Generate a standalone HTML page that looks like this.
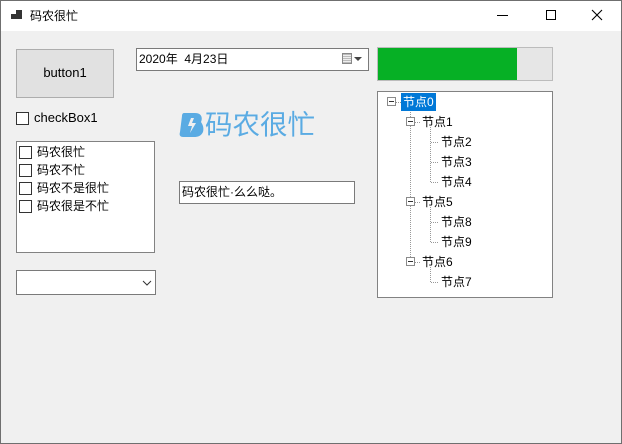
<!DOCTYPE html>
<html><head><meta charset="utf-8"><style>
*{margin:0;padding:0;box-sizing:border-box}
body{width:622px;height:444px;overflow:hidden;background:#f0f0f0;font-family:"Liberation Sans","Noto Sans CJK SC",sans-serif;font-size:12px;color:#000;position:relative}
.a{position:absolute}
.win{left:0;top:0;width:622px;height:444px;border:1px solid #6f6f6f}
.title{left:1px;top:1px;width:620px;height:30px;background:#fff}
.cb{width:13px;height:13px;border:1px solid #333;background:#fff}
.t{white-space:nowrap;line-height:16px}
.dot{border-left:1px dotted #999}
.hd{border-top:1px dotted #999;height:0}
.eb{width:9px;height:9px;border:1px solid #8a8a8a;background:#fff}
.eb:after{content:"";position:absolute;left:1px;top:3px;width:5px;height:1px;background:#333}
</style></head><body>
<div class="a win"></div>
<div class="a title"></div>
<div class="a" style="left:11px;top:14px;width:5px;height:5px;background:#333"></div>
<div class="a" style="left:16px;top:10px;width:6px;height:9px;background:#333"></div>
<div class="a t" style="left:30px;top:8px;font-size:12px">码农很忙</div>
<div class="a" style="left:497px;top:15px;width:11px;height:1px;background:#000"></div>
<div class="a" style="left:546px;top:10px;width:10px;height:10px;border:1px solid #000"></div>
<svg class="a" style="left:591px;top:9px" width="12" height="12"><path d="M1 1L11 11M11 1L1 11" stroke="#000" stroke-width="1.1"/></svg>

<div class="a" style="left:16px;top:49px;width:98px;height:49px;background:#e1e1e1;border:1px solid #adadad"></div>
<div class="a t" style="left:16px;top:65px;width:98px;text-align:center;font-size:13px">button1</div>

<div class="a" style="left:136px;top:48px;width:233px;height:23px;background:#fff;border:1px solid #7a7a7a"></div>
<div class="a t" style="left:139px;top:51px;font-size:12px">2020年&nbsp; 4月23日</div>
<div class="a" style="left:342px;top:53px;width:10px;height:11px;border:1px solid #888;background:repeating-linear-gradient(0deg,#bbb 0 1px,#eee 1px 2px)"></div>
<div class="a" style="left:354px;top:57px;width:0;height:0;border-left:4px solid transparent;border-right:4px solid transparent;border-top:4px solid #444"></div>

<div class="a" style="left:377px;top:47px;width:176px;height:34px;background:#e6e6e6;border:1px solid #bcbcbc"></div>
<div class="a" style="left:378px;top:48px;width:139px;height:32px;background:#06b025"></div>

<div class="a cb" style="left:16px;top:112px"></div>
<div class="a t" style="left:34px;top:110px;font-size:13px">checkBox1</div>

<div class="a" style="left:16px;top:141px;width:139px;height:112px;background:#fff;border:1px solid #828282"></div>
<div class="a cb" style="left:19px;top:146px"></div><div class="a t" style="left:37px;top:144px">码农很忙</div>
<div class="a cb" style="left:19px;top:164px"></div><div class="a t" style="left:37px;top:162px">码农不忙</div>
<div class="a cb" style="left:19px;top:182px"></div><div class="a t" style="left:37px;top:180px">码农不是很忙</div>
<div class="a cb" style="left:19px;top:200px"></div><div class="a t" style="left:37px;top:198px">码农很是不忙</div>

<div class="a" style="left:16px;top:270px;width:140px;height:25px;background:#fff;border:1px solid #7a7a7a"></div>
<svg class="a" style="left:142px;top:280px" width="10" height="6"><path d="M1 1L5 5L9 1" stroke="#333" fill="none"/></svg>

<svg class="a" style="left:179px;top:112px" width="25" height="26"><path d="M5 1H16C22 1 24 5 22 10C24 13 25 16 24 20C22 24 19 25 15 25H4C1 25 0 23 1 20L3 4C3 2 4 1 5 1Z" fill="#5aabe3"/><path d="M12 6L9 14H13L11 21L17 11H13L15 6Z" fill="#f0f0f0"/></svg>
<div class="a t" style="left:205px;top:109px;font-size:27.5px;line-height:32px;color:#5aabe3">码农很忙</div>

<div class="a" style="left:179px;top:181px;width:176px;height:23px;background:#fff;border:1px solid #7a7a7a"></div>
<div class="a t" style="left:182px;top:184px">码农很忙·么么哒。</div>

<div class="a" style="left:377px;top:91px;width:176px;height:207px;background:#fff;border:1px solid #828282"></div>
<div class="a dot" style="left:410px;top:107px;height:156px"></div>
<div class="a dot" style="left:430px;top:127px;height:55px"></div>
<div class="a dot" style="left:430px;top:207px;height:35px"></div>
<div class="a dot" style="left:430px;top:267px;height:15px"></div>
<div class="a hd" style="left:396px;top:102px;width:5px"></div>
<div class="a" style="left:401px;top:93px;width:35px;height:18px;background:#0078d7"></div>
<div class="a t" style="left:403px;top:94px;color:#fff">节点0</div>
<div class="a eb" style="left:387px;top:97px"></div>
<div class="a eb" style="left:406px;top:117px"></div><div class="a hd" style="left:415px;top:122px;width:5px"></div><div class="a t" style="left:422px;top:114px">节点1</div>
<div class="a hd" style="left:431px;top:142px;width:7px"></div><div class="a t" style="left:441px;top:134px">节点2</div>
<div class="a hd" style="left:431px;top:162px;width:7px"></div><div class="a t" style="left:441px;top:154px">节点3</div>
<div class="a hd" style="left:431px;top:182px;width:7px"></div><div class="a t" style="left:441px;top:174px">节点4</div>
<div class="a eb" style="left:406px;top:197px"></div><div class="a hd" style="left:415px;top:202px;width:5px"></div><div class="a t" style="left:422px;top:194px">节点5</div>
<div class="a hd" style="left:431px;top:222px;width:7px"></div><div class="a t" style="left:441px;top:214px">节点8</div>
<div class="a hd" style="left:431px;top:242px;width:7px"></div><div class="a t" style="left:441px;top:234px">节点9</div>
<div class="a eb" style="left:406px;top:257px"></div><div class="a hd" style="left:415px;top:262px;width:5px"></div><div class="a t" style="left:422px;top:254px">节点6</div>
<div class="a hd" style="left:431px;top:282px;width:7px"></div><div class="a t" style="left:441px;top:274px">节点7</div>
</body></html>
